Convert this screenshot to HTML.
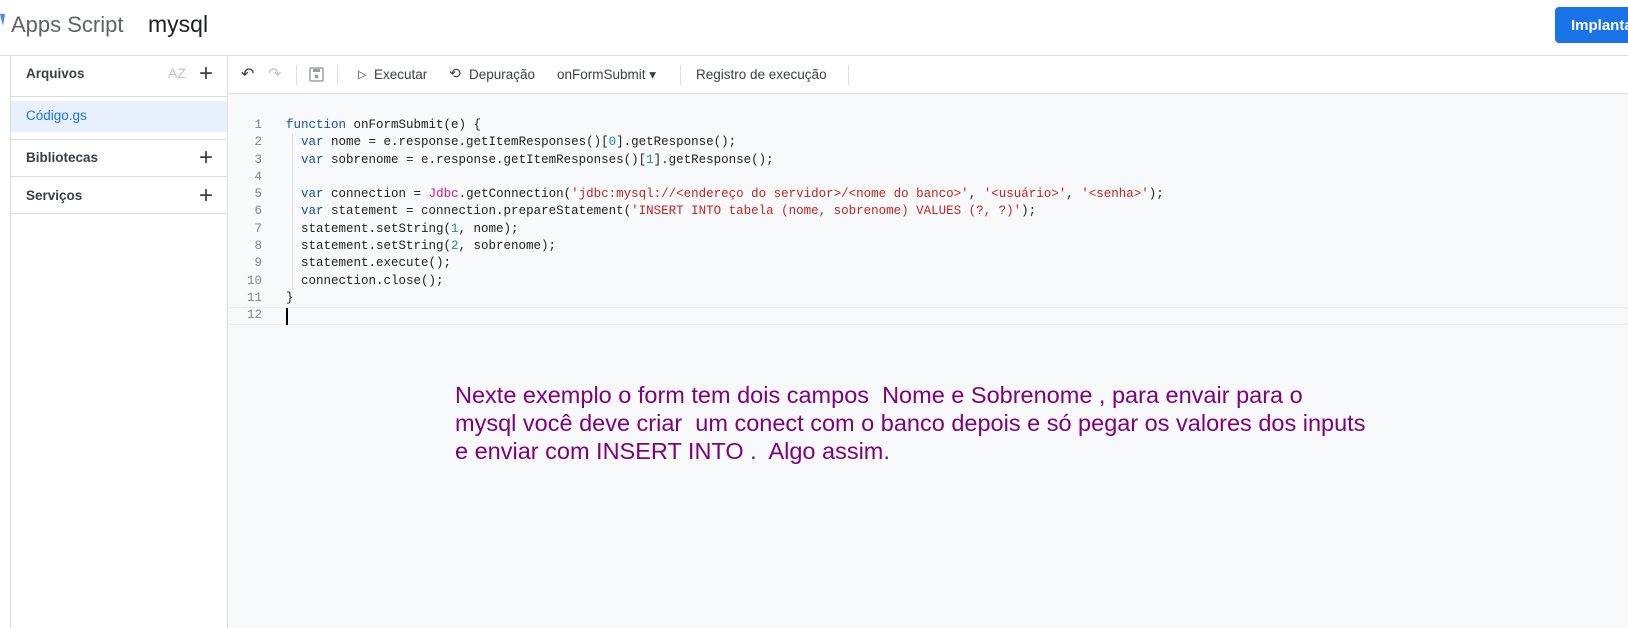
<!DOCTYPE html>
<html><head><meta charset="utf-8"><style>
*{box-sizing:border-box;margin:0;padding:0}
body{width:1628px;height:628px;overflow:hidden;background:#fff;font-family:"Liberation Sans",Arial,sans-serif;position:relative}
.hdr{position:absolute;left:0;top:0;width:1628px;height:56px;border-bottom:1px solid #dadce0}
.t1{position:absolute;left:11px;top:12px;font-size:22px;color:#5f6368}
.t2{position:absolute;left:148px;top:11px;font-size:23px;color:#202124}
.btn{position:absolute;left:1555px;top:7px;width:90px;height:36px;background:#1a73e8;border-radius:4px;color:#fff;font-size:15px;font-weight:bold;padding:10px 0 0 16px}
.strip{position:absolute;left:10px;top:56px;width:1px;height:572px;background:#dadce0}
.side{position:absolute;left:11px;top:56px;width:217px;height:572px;border-right:1px solid #dadce0}
.sh{position:absolute;left:15px;font-size:13.5px;color:#3c4043;font-weight:bold}
.plus{position:absolute;left:188px;font-size:24px;color:#3c4043;font-weight:300;line-height:1}
.line{position:absolute;left:0;width:217px;height:1px;background:#dadce0}
.sel{position:absolute;left:0;top:45px;width:216px;height:31px;background:#e8f0fe;color:#1a73e8;font-size:13.5px;padding:7px 0 0 15px}
.tb{position:absolute;left:229px;top:56px;width:1399px;height:38px;border-bottom:1px solid #dadce0;font-size:13.5px;color:#3c4043}
.tb span{position:absolute;top:11px}
.sep{position:absolute;top:9px;width:1px;height:20px;background:#dadce0}
.ed{position:absolute;left:229px;top:94px;width:1399px;height:534px;background:#f8f9fa}
.code{position:absolute;left:0;top:23px;font-family:"Liberation Mono",monospace;font-size:12.5px;color:#202124;line-height:17.3px;white-space:pre}
.ln{position:absolute;left:0;width:33px;text-align:right;color:#80868b}
.c{position:absolute;left:57px}
.k{color:#1a4fa0}.s{color:#c5221f}.n{color:#188a9a}.j{color:#d01884}
.cur{position:absolute;left:0;top:213px;width:1399px;height:18px;border-top:1px solid #e8eaed;border-bottom:1px solid #e8eaed}
.caret{position:absolute;left:57px;top:214px;width:2px;height:17px;background:#000}
.guide{position:absolute;left:63px;top:40px;width:1px;height:156px;background:#dadce0}
.note{position:absolute;left:455px;top:381px;font-size:23.5px;line-height:28px;color:#800080;white-space:pre}
</style></head><body>
<div class="hdr">
<svg style="position:absolute;left:0;top:12px" width="6" height="22"><path d="M0 2 L5 2 L3 14 Z" fill="#4285f4"/></svg>
<div class="t1">Apps Script</div><div class="t2">mysql</div>
<div class="btn">Implantar</div>
</div>
<div class="strip"></div>
<div class="side">
<div class="sh" style="top:10px">Arquivos</div>
<div style="position:absolute;left:157px;top:9px;font-size:14px;color:#bdc1c6">AZ</div>
<div class="plus" style="top:6px">+</div>
<div class="line" style="top:40px"></div>
<div class="sel">Código.gs</div>
<div class="line" style="top:83px"></div>
<div class="sh" style="top:94px">Bibliotecas</div><div class="plus" style="top:90px">+</div>
<div class="line" style="top:120px"></div>
<div class="sh" style="top:132px">Serviços</div><div class="plus" style="top:128px">+</div>
<div class="line" style="top:157px"></div>
</div>
<div class="tb">
<span style="left:12px;font-size:16px;top:8px">↶</span>
<span style="left:39px;font-size:16px;top:8px;color:#bdc1c6">↷</span>
<div class="sep" style="left:67px"></div>
<svg style="position:absolute;left:80px;top:11px" width="15" height="15"><rect x="1" y="1" width="13" height="13" rx="1" fill="none" stroke="#9aa0a6" stroke-width="1.5"/><rect x="4" y="2" width="7" height="3" fill="#9aa0a6"/><circle cx="7.5" cy="9.5" r="2" fill="#9aa0a6"/></svg>
<div class="sep" style="left:108px"></div>
<span style="left:129px;font-size:11px;top:12px">▷</span><span style="left:145px">Executar</span>
<span style="left:220px;font-size:14px;top:9px">⟲</span><span style="left:240px">Depuração</span>
<span style="left:328px">onFormSubmit ▾</span>
<div class="sep" style="left:451px"></div>
<span style="left:467px">Registro de execução</span>
<div class="sep" style="left:619px"></div>
</div>
<div class="ed">
<div class="cur"></div><div class="caret"></div><div class="guide"></div>
<div class="code"><div class="ln" style="top:0">1
2
3
4
5
6
7
8
9
10
11
12</div><div class="c"><span class="k">function</span> onFormSubmit(e) {
  <span class="k">var</span> nome = e.response.getItemResponses()[<span class="n">0</span>].getResponse();
  <span class="k">var</span> sobrenome = e.response.getItemResponses()[<span class="n">1</span>].getResponse();

  <span class="k">var</span> connection = <span class="j">Jdbc</span>.getConnection(<span class="s">'jdbc:mysql://&lt;endereço do servidor&gt;/&lt;nome do banco&gt;'</span>, <span class="s">'&lt;usuário&gt;'</span>, <span class="s">'&lt;senha&gt;'</span>);
  <span class="k">var</span> statement = connection.prepareStatement(<span class="s">'INSERT INTO tabela (nome, sobrenome) VALUES (?, ?)'</span>);
  statement.setString(<span class="n">1</span>, nome);
  statement.setString(<span class="n">2</span>, sobrenome);
  statement.execute();
  connection.close();
}</div></div>
</div>
<div class="note">Nexte exemplo o form tem dois campos  Nome e Sobrenome , para envair para o
mysql você deve criar  um conect com o banco depois e só pegar os valores dos inputs
e enviar com INSERT INTO .  Algo assim.</div>
</body></html>
